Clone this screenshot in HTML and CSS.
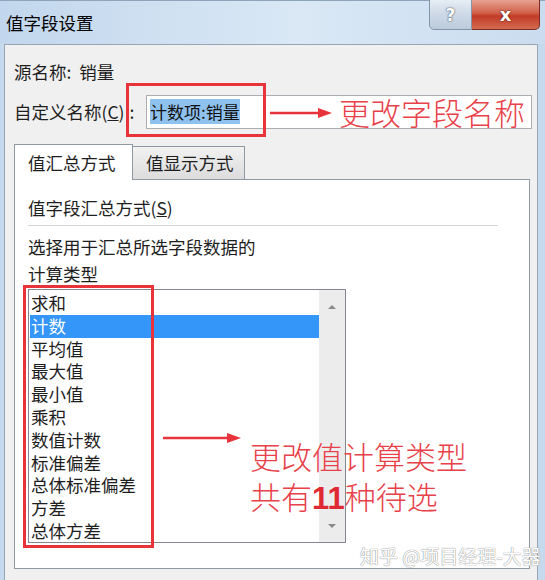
FILE: index.html
```html
<!DOCTYPE html>
<html lang="zh-CN">
<head>
  <meta charset="UTF-8">
  <title>值字段设置</title>
  <link rel="stylesheet" href="styles.css">
</head>
<body>

  <div class="window">
    <div class="titlebar">
      <span class="title">值字段设置</span>
      <div class="caption-btns">
        <span class="btn-help">?</span>
        <span class="btn-close">x</span>
      </div>
    </div>

    <div class="client">
      <div class="row-source">源名称:&nbsp; 销量</div>

      <div class="row-name">
        <label class="name-label">自定义名称(<u>C</u>)<span class="colon">:</span></label>
        <div class="name-input"><span class="sel">计数项:销量</span></div>
      </div>

      <div class="tabs">
        <div class="tab active">值汇总方式</div>
        <div class="tab">值显示方式</div>
      </div>

      <div class="tabpanel">
        <div class="group-title">值字段汇总方式(<u>S</u>)</div>
        <div class="sep"></div>
        <div class="desc">选择用于汇总所选字段数据的<br>计算类型</div>

        <div class="listbox">
          <ul class="items">
            <li>求和</li>
            <li class="selected">计数</li>
            <li>平均值</li>
            <li>最大值</li>
            <li>最小值</li>
            <li>乘积</li>
            <li>数值计数</li>
            <li>标准偏差</li>
            <li>总体标准偏差</li>
            <li>方差</li>
            <li>总体方差</li>
          </ul>
          <div class="scrollbar">
            <span class="arrow-up"></span>
            <span class="arrow-down"></span>
          </div>
        </div>
      </div>
    </div>

    <!-- annotations drawn over the dialog -->
    <div class="mark mark-name"></div>
    <div class="mark mark-list"></div>

    <svg class="pointer pointer-name" width="62" height="12" viewBox="0 0 62 12">
      <path d="M0 6 H50" stroke="#e8333b" stroke-width="2.5"/>
      <path d="M48 1 L62 6 L48 11 Z" fill="#e8333b"/>
    </svg>
    <svg class="pointer pointer-list" width="78" height="12" viewBox="0 0 78 12">
      <path d="M0 6 H66" stroke="#e8333b" stroke-width="2.5"/>
      <path d="M64 1 L78 6 L64 11 Z" fill="#e8333b"/>
    </svg>

    <div class="note note-name">更改字段名称</div>
    <div class="note note-list">
      <div>更改值计算类型</div>
      <div>共有<b>11</b>种待选</div>
    </div>

    <div class="watermark">知乎 @项目经理-大器</div>
  </div>

</body>
</html>
```

FILE: styles.css
```css
* {
  box-sizing: border-box;
}

body {
  margin: 0;
  font-family: "Noto Sans CJK SC", "Noto Sans", sans-serif;
  color: #1e1e1e;
}

.window {
  position: relative;
  width: 545px;
  height: 580px;
  overflow: hidden;
  background: #c6daee;
}

.titlebar {
  display: flex;
  align-items: flex-start;
  height: 44px;
  background: linear-gradient(to right, #c2d7ed, #dae8f5 55%, #cadcef);
  border-top: 1px solid #8fa4bb;
}

.title {
  padding: 10px 0 0 6px;
  font-size: 17.5px;
  line-height: 24px;
  color: #000;
}

.caption-btns {
  display: flex;
  margin-left: auto;
  margin-right: 5px;
  margin-top: -2px;
}

.btn-help,
.btn-close {
  display: flex;
  align-items: center;
  justify-content: center;
  height: 31px;
  font-family: "DejaVu Sans", sans-serif;
  font-weight: bold;
  color: #fff;
}

.btn-help {
  width: 43px;
  border: 1px solid #8594a8;
  border-radius: 0 0 0 5px;
  background: linear-gradient(#e6edf5, #cdd9e6 50%, #bccbdc);
  font-size: 17px;
  text-shadow: 0 0 2px #4d5a6a, 0 0 1px #4d5a6a;
}

.btn-close {
  width: 68px;
  border: 1px solid #7a2d24;
  border-left: none;
  border-radius: 0 0 5px 0;
  background: linear-gradient(#e6a18f, #d0604a 45%, #c23b26 55%, #d46a50);
  font-size: 18px;
  text-shadow: 0 0 2px #6b1a10, 0 0 1px #6b1a10;
}

.client {
  margin: 0 7px 0 4px;
  height: 540px;
  padding: 15px 5px 0 9px;
  background: #f0f0f0;
  border: 1px solid #98a6b6;
  font-size: 17.5px;
}

.row-source {
  line-height: 24px;
}

.row-name {
  display: flex;
  align-items: center;
  margin-top: 11px;
}

.name-label {
  flex-shrink: 0;
  width: 132px;
  white-space: nowrap;
  line-height: 24px;
}

.colon {
  margin-left: 5px;
}

.name-input {
  flex: 1;
  height: 34px;
  padding: 4px 3px;
  background: #fff;
  border: 1px solid #abadb3;
  font-size: 17px;
  line-height: 24px;
}

.sel {
  background: #90c2f0;
  color: #111;
}

.tabs {
  display: flex;
  align-items: flex-end;
  margin-top: 14px;
  height: 36px;
}

.tab {
  width: 112px;
  height: 33px;
  padding-left: 13px;
  line-height: 32px;
  border: 1px solid #8e99a6;
  border-bottom: none;
  border-left: none;
  background: linear-gradient(#f2f2f2, #dcdcdc);
}

.tab.active {
  position: relative;
  z-index: 1;
  width: 119px;
  height: 36px;
  margin-bottom: -1px;
  border-left: 1px solid #8e99a6;
  background: #fff;
  line-height: 36px;
}

.tabpanel {
  margin-right: 2px;
  height: 390px;
  padding: 16px 0 0 13px;
  background: #fff;
  border: 1px solid #8e99a6;
}

.group-title {
  line-height: 24px;
}

.sep {
  margin: 5px 31px 0 0;
  height: 1px;
  background: #d5d5d5;
}

.desc {
  margin-top: 7px;
  line-height: 27px;
}

.listbox {
  display: flex;
  width: 318px;
  height: 254px;
  margin-top: 2px;
  border: 1px solid #828790;
}

.items {
  flex: 1;
  margin: 0;
  padding: 2px 0 0 1px;
  list-style: none;
}

.items li {
  height: 22.8px;
  padding-left: 1px;
  line-height: 22.8px;
}

.items li.selected {
  background: #3396f8;
  color: #fff;
}

.scrollbar {
  display: flex;
  flex-direction: column;
  justify-content: space-between;
  align-items: center;
  width: 26px;
  padding: 15px 0 14px;
  background: #ececec;
}

.arrow-up,
.arrow-down {
  width: 0;
  height: 0;
  border-left: 4px solid transparent;
  border-right: 4px solid transparent;
}

.arrow-up {
  border-bottom: 4px solid #8a8a8a;
}

.arrow-down {
  border-top: 4px solid #8a8a8a;
}

/* red annotations */
.mark {
  position: absolute;
  border: 3px solid #e8333b;
}

.mark-name {
  left: 126px;
  top: 83px;
  width: 140px;
  height: 54px;
}

.mark-list {
  left: 23px;
  top: 285px;
  width: 131px;
  height: 263px;
}

.pointer {
  position: absolute;
}

.pointer-name {
  left: 270px;
  top: 107px;
}

.pointer-list {
  left: 163px;
  top: 432px;
}

.note {
  position: absolute;
  color: #e8414a;
  font-size: 31px;
  font-weight: 300;
}

.note-name {
  left: 339px;
  top: 91px;
  line-height: 42px;
}

.note-list {
  left: 250px;
  top: 436px;
  line-height: 40px;
}

.note b {
  font-family: "Liberation Sans", sans-serif;
  font-weight: bold;
  color: #e02a33;
}

.watermark {
  position: absolute;
  left: 360px;
  top: 543px;
  font-size: 19px;
  line-height: 26px;
  color: #fff;
  text-shadow: 0 0 1px #8c8c8c, 0 0 1px #8c8c8c;
}
```
